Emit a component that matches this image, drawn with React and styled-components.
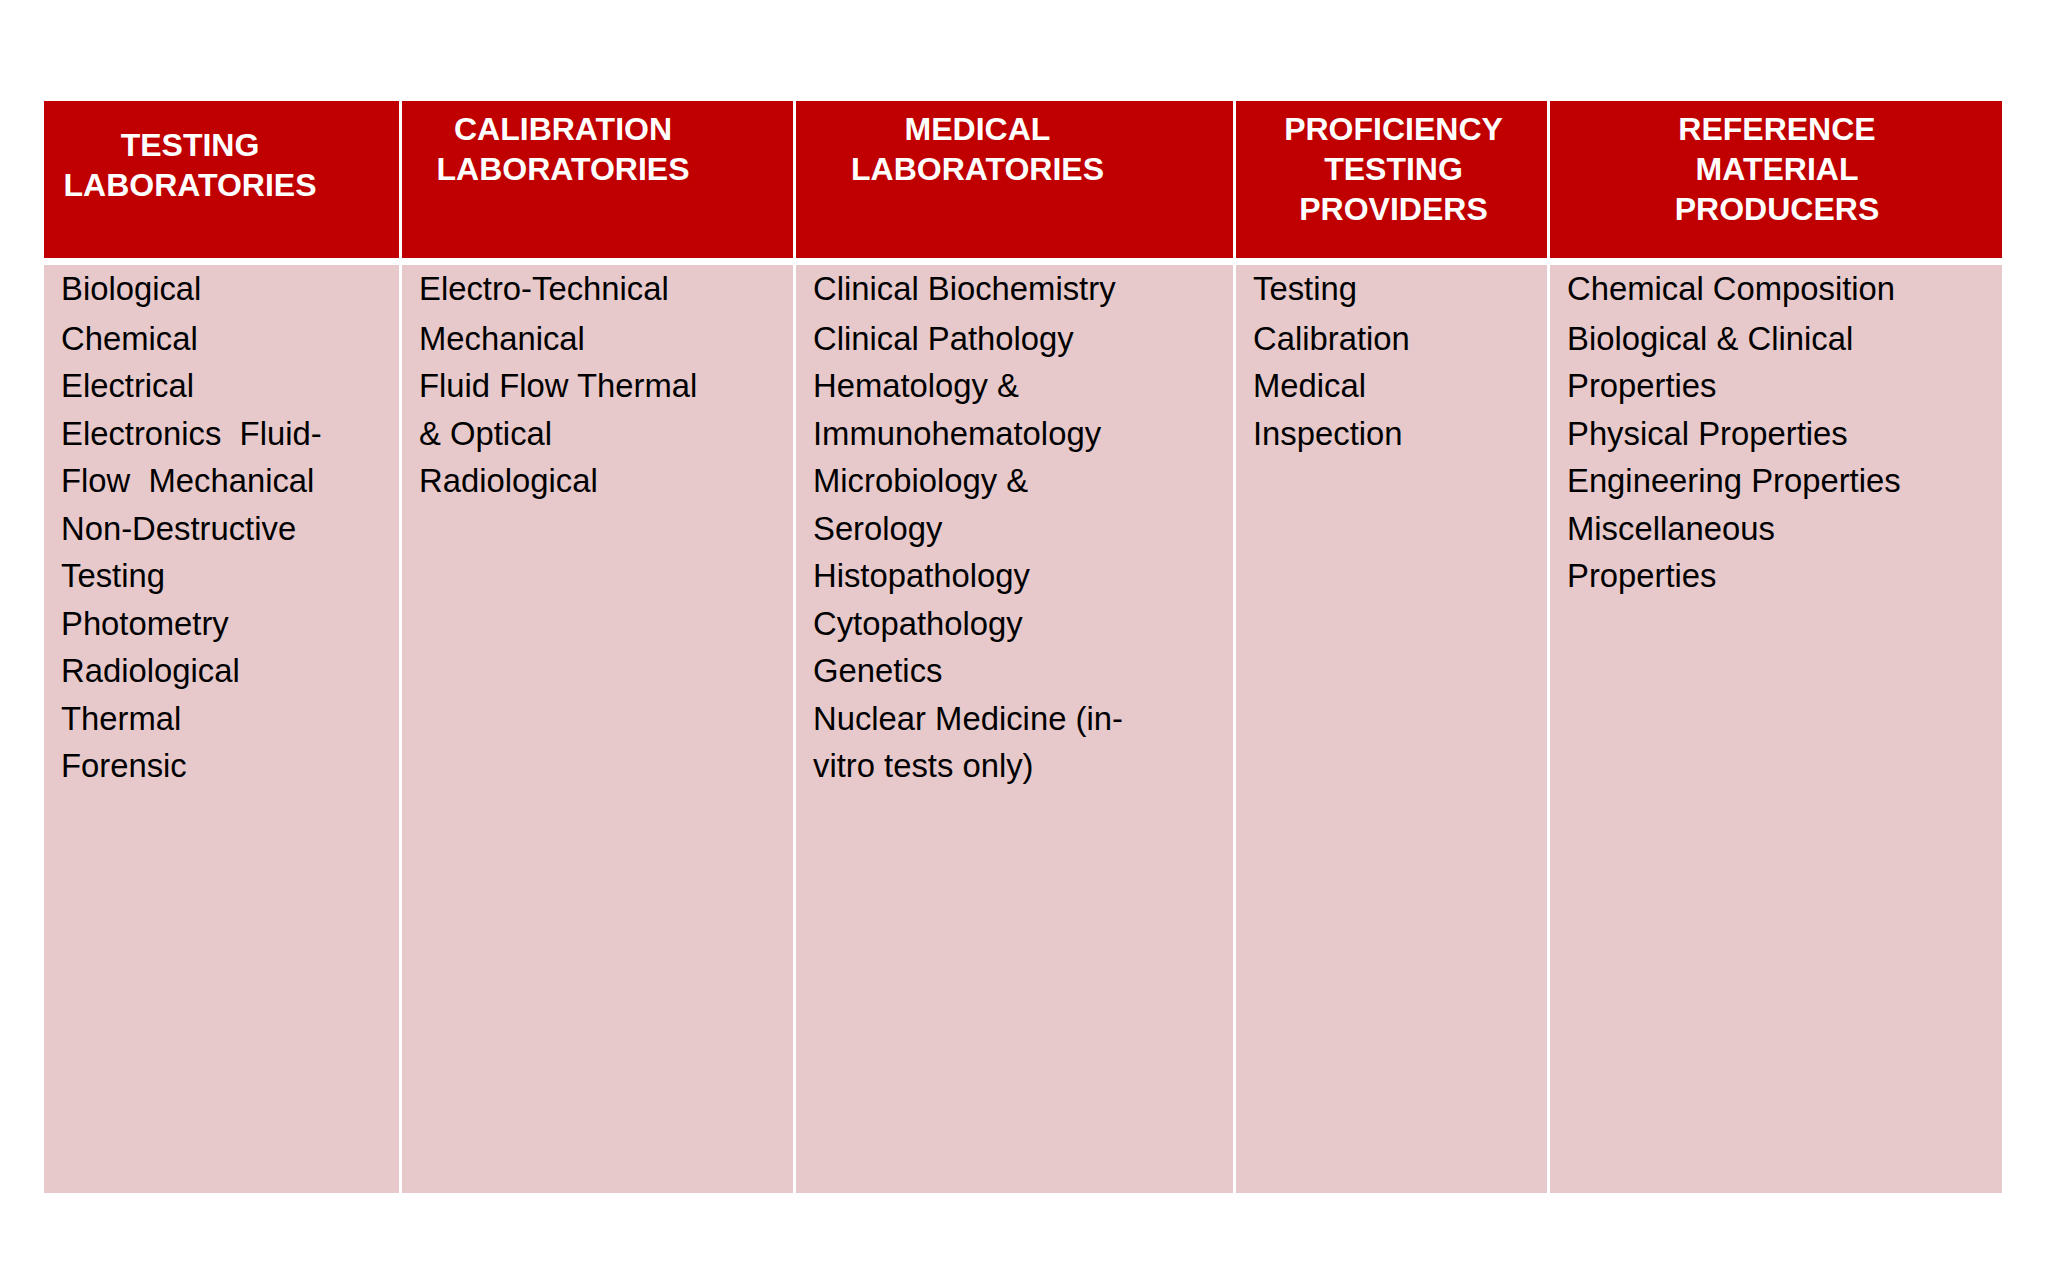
import React from "react";
import styled, { createGlobalStyle } from "styled-components";

const GlobalStyle = createGlobalStyle`
  html, body {
    margin: 0;
    padding: 0;
    background: #ffffff;
  }
  body {
    font-family: "Liberation Sans", Arial, sans-serif;
  }
`;

const Page = styled.div`
  width: 2048px;
  height: 1280px;
  box-sizing: border-box;
  padding: 101px 0 0 44px;
  background: #ffffff;
`;

const Table = styled.div`
  display: grid;
  grid-template-columns: 355px 391px 437px 311px 452px;
  grid-template-rows: 157px 928px;
  column-gap: 3px;
  row-gap: 7px;
`;

const HeadCell = styled.div`
  background: #c00000;
  color: #ffffff;
  font-weight: 700;
  font-size: 32px;
  line-height: 40px;
  text-align: center;
  white-space: pre-line;
  box-sizing: border-box;
  padding: ${(p) => p.$top}px ${(p) => 10 + p.$shift}px 0 10px;
`;

const BodyCell = styled.div`
  background: #e7c9cb;
  color: #000000;
  box-sizing: border-box;
  padding: 0 8px 0 17px;
`;

const Item = styled.div`
  font-size: 32.8px;
  line-height: 47.5px;
  white-space: pre-wrap;

  &:first-child {
    margin-bottom: 2px;
  }
`;

const columns = [
  {
    title: "TESTING\nLABORATORIES",
    top: 24,
    shift: 63,
    items: [
      "Biological",
      "Chemical",
      "Electrical",
      "Electronics  Fluid-\nFlow  Mechanical",
      "Non-Destructive\nTesting",
      "Photometry",
      "Radiological",
      "Thermal",
      "Forensic",
    ],
  },
  {
    title: "CALIBRATION\nLABORATORIES",
    top: 8,
    shift: 69,
    items: [
      "Electro-Technical",
      "Mechanical",
      "Fluid Flow Thermal\n& Optical",
      "Radiological",
    ],
  },
  {
    title: "MEDICAL\nLABORATORIES",
    top: 8,
    shift: 74,
    items: [
      "Clinical Biochemistry",
      "Clinical Pathology",
      "Hematology &\nImmunohematology",
      "Microbiology &\nSerology",
      "Histopathology",
      "Cytopathology",
      "Genetics",
      "Nuclear Medicine (in-\nvitro tests only)",
    ],
  },
  {
    title: "PROFICIENCY\nTESTING\nPROVIDERS",
    top: 8,
    shift: -4,
    items: ["Testing", "Calibration", "Medical", "Inspection"],
  },
  {
    title: "REFERENCE\nMATERIAL\nPRODUCERS",
    top: 8,
    shift: -2,
    items: [
      "Chemical Composition",
      "Biological & Clinical\nProperties",
      "Physical Properties",
      "Engineering Properties",
      "Miscellaneous\nProperties",
    ],
  },
];

const App = () => {
  return (
    <Page>
      <GlobalStyle />
      <Table>
        {columns.map((col) => (
          <HeadCell key={col.title} $top={col.top} $shift={col.shift}>
            {col.title}
          </HeadCell>
        ))}
        {columns.map((col) => (
          <BodyCell key={col.title + "-body"}>
            {col.items.map((item) => (
              <Item key={item}>{item}</Item>
            ))}
          </BodyCell>
        ))}
      </Table>
    </Page>
  );
};

export default App;
